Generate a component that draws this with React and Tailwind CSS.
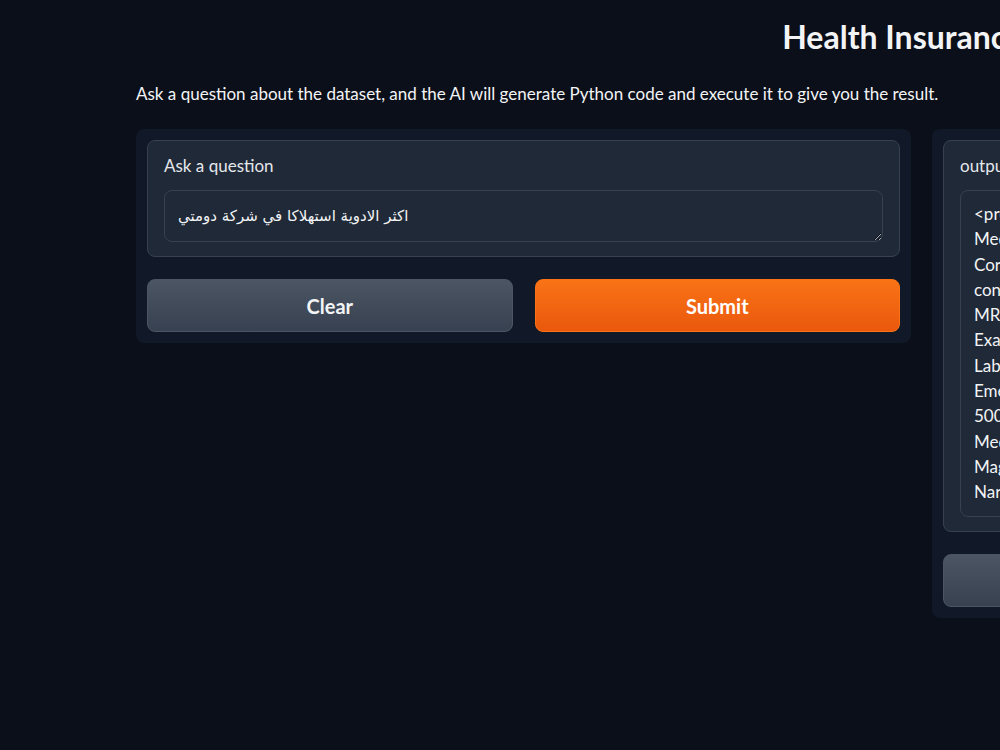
import React from 'react';

const outputLines = [
    '<pre>',
    'Medication                                   Consumption',
    'Cortisone injection (Depo-Medrol 40mg)       1250',
    'contrast agent for CT scan                   1120',
    'MRI contrast (Gadolinium)                    980',
    'Examination gloves                           870',
    'Laboratory reagent kit                       760',
    'Emergency saline infusion 0.9%               650',
    '500mg Paracetamol tablets                    540',
    'Medical consumables pack                     430',
    'Magnesium sulfate injection                  320',
    'Narcotic analgesic (Tramadol 50mg)           210',
];

export default function App() {
    return (
        <div className="min-h-[750px] w-full overflow-hidden bg-[#0b0f19] text-[#f3f4f6]" style={{ fontFamily: 'Lato, "DejaVu Sans", sans-serif' }}>
            <div className="ml-[136px] w-[1733px] pt-[17px]">
                {/* Header */}
                <h1 className="text-center text-[32px] font-bold leading-[40px]">Health Insurance Data Analysis</h1>
                <p className="mt-[25px] text-[17px] leading-[24px]">
                    Ask a question about the dataset, and the AI will generate Python code and execute it to give you the result.
                </p>

                <div className="mt-[23px] flex items-start gap-[21px]">
                    {/* Left column */}
                    <div className="w-[775px] rounded-lg bg-[#111827] p-[11px]">
                        <div className="rounded-lg border border-[#374151] bg-[#1f2937] px-4 pt-[15px] pb-[14px]">
                            <div className="text-[17px] leading-5 text-[#e5e7eb]">Ask a question</div>
                            <textarea
                                readOnly
                                rows={1}
                                value="اكثر الادوية استهلاكا في شركة دومتي"
                                className="mt-[14px] block h-[52px] w-full resize-y rounded-lg border border-[#374151] bg-[#1f2937] px-[13px] py-[13px] text-[15px] leading-6 text-[#f3f4f6] outline-none"
                                style={{ fontFamily: '"DejaVu Sans", sans-serif' }}
                            />
                        </div>
                        <div className="mt-[22px] flex gap-[22px]">
                            <button className="h-[53px] flex-1 rounded-lg border border-[#4b5563] bg-gradient-to-b from-[#4b5563] to-[#374151] text-[20px] font-bold text-[#f3f4f6]">
                                Clear
                            </button>
                            <button className="h-[53px] flex-1 rounded-lg border border-[#f97316] bg-gradient-to-b from-[#f97316] to-[#ea580c] text-[20px] font-bold text-white">
                                Submit
                            </button>
                        </div>
                    </div>

                    {/* Right column */}
                    <div className="w-[775px] rounded-lg bg-[#111827] p-[11px]">
                        <div className="rounded-lg border border-[#374151] bg-[#1f2937] px-4 pt-[15px] pb-[14px]">
                            <div className="text-[17px] leading-5 text-[#e5e7eb]">output</div>
                            <div className="mt-[14px] h-[327px] overflow-hidden rounded-lg border border-[#374151] bg-[#1f2937] px-[13px] pt-[10px]">
                                {outputLines.map((line, i) => (
                                    <div key={i} className="whitespace-pre text-[17px] leading-[25.3px]">{line}</div>
                                ))}
                            </div>
                        </div>
                        <div className="mt-[22px] flex">
                            <button className="h-[53px] flex-1 rounded-lg border border-[#4b5563] bg-gradient-to-b from-[#4b5563] to-[#374151] text-[20px] font-bold text-[#f3f4f6]">
                                Flag
                            </button>
                        </div>
                    </div>
                </div>
            </div>
        </div>
    );
}
